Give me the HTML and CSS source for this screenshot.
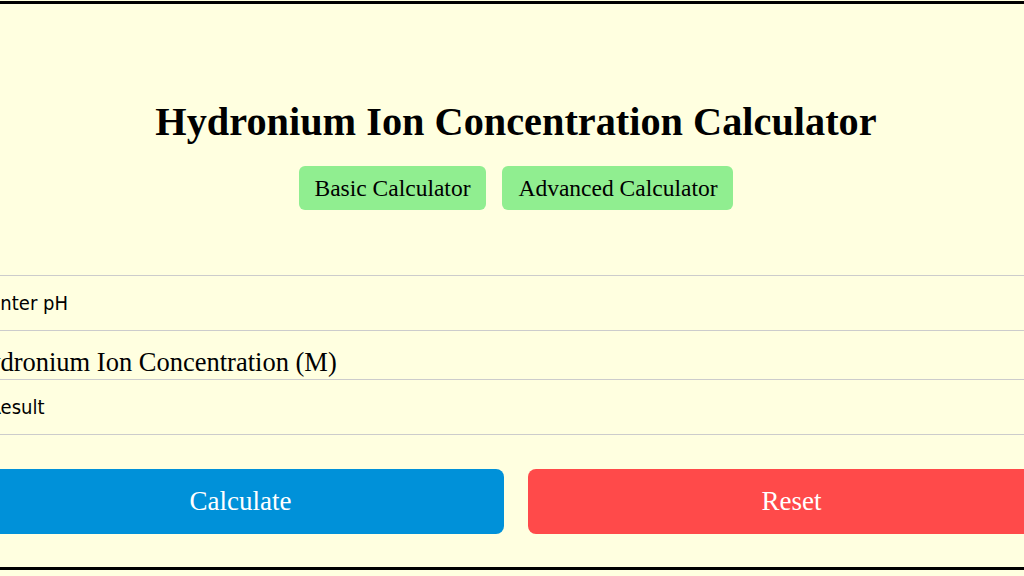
FILE: index.html
```html
<!DOCTYPE html>
<html>
<head>
  <title>Hydronium Ion Concentration Calculator</title>
  <meta name="viewport" content="width=device-width, initial-scale=1.0">
  <link rel="stylesheet" href="styles.css">
</head>
<body>
  <div class="page">
    <h1>Hydronium Ion Concentration Calculator</h1>
    <div class="tabs">
      <button class="tab">Basic Calculator</button>
      <button class="tab">Advanced Calculator</button>
    </div>
    <div class="form">
      <input type="text" id="ph" class="field" placeholder="Enter pH">
      <label for="result" class="label">Hydronium Ion Concentration (M)</label>
      <input type="text" id="result" class="field" placeholder="Result" readonly>
      <div class="actions">
        <button class="btn calc">Calculate</button>
        <button class="btn reset">Reset</button>
      </div>
    </div>
  </div>
</body>
</html>
```

FILE: styles.css
```css
html, body {
  margin: 0;
  overflow: hidden;
}

body {
  background-color: #ffffe0;
  font-family: "Liberation Serif", "Times New Roman", serif;
}

.page {
  width: 1078px;
  height: 569px;
  margin: 1px 0 0 -23px;
  padding-top: 96px;
  border-top: 3px solid #000;
  border-bottom: 3px solid #000;
  box-sizing: border-box;
}

h1 {
  margin: 0;
  text-align: center;
  font-size: 40.3px;
  line-height: 44px;
  color: #000;
}

.tabs {
  display: flex;
  justify-content: center;
  gap: 16px;
  margin-top: 22px;
}

.tab {
  height: 44px;
  padding: 0 16px;
  background-color: #90ee90;
  border: none;
  border-radius: 6px;
  font-family: "Liberation Serif", "Times New Roman", serif;
  font-size: 23.5px;
  color: #000;
}

.form {
  margin-top: 65px;
  display: flex;
  flex-direction: column;
}

.field {
  height: 56px;
  padding: 0 11px;
  border: 1px solid #ccc;
  background-color: #ffffe0;
  font-family: "DejaVu Sans Condensed", "DejaVu Sans", Tahoma, sans-serif;
  font-size: 20px;
  box-sizing: border-box;
}

.field::placeholder {
  color: #000;
}

.label {
  display: block;
  margin-left: -9px;
  padding: 18px 0 3px;
  font-size: 26.5px;
  line-height: 27px;
}

.actions {
  display: flex;
  gap: 24px;
  margin-top: 34px;
}

.btn {
  flex: 1;
  height: 65px;
  border: none;
  border-radius: 8px;
  color: #fff;
  font-family: "Liberation Serif", "Times New Roman", serif;
  font-size: 27px;
}

.calc {
  background-color: #0091d9;
}

.reset {
  background-color: #ff4a4a;
}
```
